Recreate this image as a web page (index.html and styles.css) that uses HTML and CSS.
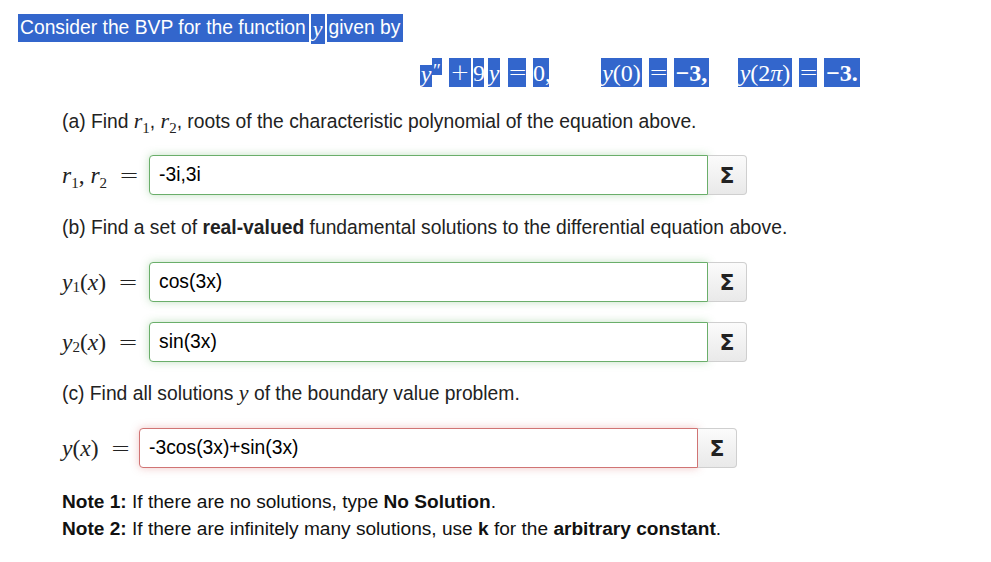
FILE: index.html
```html
<!DOCTYPE html>
<html>
<head>
<meta charset="utf-8">
<link rel="stylesheet" href="styles.css">
</head>
<body>
<div class="page">
  <div class="intro"><span class="hl">Consider the BVP for the function</span><span class="hlm"><i>y</i></span><span class="hl hl2">given by</span></div>

  <div class="eqline">
    <span class="tok t-y1"><i>y</i></span>
    <span class="tok t-pp">″</span>
    <span class="tok t-plus op">+</span>
    <span class="tok t-9">9</span>
    <span class="tok t-y2"><i>y</i></span>
    <span class="tok t-eq op">=</span>
    <span class="tok t-0">0,</span>
    <span class="tok t-y0"><i>y</i>(0)</span>
    <span class="tok t-eq op">=</span>
    <span class="tok t-m3 b">−3,</span>
    <span class="tok t-y2pi"><i>y</i>(2<i>π</i>)</span>
    <span class="tok t-eq op">=</span>
    <span class="tok t-m3b b">−3.</span>
  </div>

  <div class="section">
    <p class="q">(a) Find <span class="m"><i>r</i><sub>1</sub></span>, <span class="m"><i>r</i><sub>2</sub></span>, roots of the characteristic polynomial of the equation above.</p>
    <div class="row">
      <span class="lbl m"><i>r</i><sub>1</sub>, <i>r</i><sub>2</sub><span class="eq">=</span></span>
      <div class="field ok"><span class="val">-3i,3i</span></div>
      <button class="sig">Σ</button>
    </div>
  </div>

  <div class="section">
    <p class="q q-b">(b) Find a set of <b>real-valued</b> fundamental solutions to the differential equation above.</p>
    <div class="row">
      <span class="lbl m"><i>y</i><sub class="s2">1</sub>(<i>x</i>)<span class="eq">=</span></span>
      <div class="field ok"><span class="val">cos(3x)</span></div>
      <button class="sig">Σ</button>
    </div>
    <div class="row row2">
      <span class="lbl m"><i>y</i><sub class="s2">2</sub>(<i>x</i>)<span class="eq">=</span></span>
      <div class="field ok"><span class="val">sin(3x)</span></div>
      <button class="sig">Σ</button>
    </div>
  </div>

  <div class="section">
    <p class="q q-c">(c) Find all solutions <span class="m"><i>y</i></span> of the boundary value problem.</p>
    <div class="row">
      <span class="lbl lbl-c m"><i>y</i>(<i>x</i>)<span class="eq">=</span></span>
      <div class="field bad"><span class="val">-3cos(3x)+sin(3x)</span></div>
      <button class="sig">Σ</button>
    </div>
  </div>

  <div class="notes">
    <p><b>Note 1:</b> If there are no solutions, type <b>No Solution</b>.</p>
    <p><b>Note 2:</b> If there are infinitely many solutions, use <b>k</b> for the <b>arbitrary constant</b>.</p>
  </div>
</div>
</body>
</html>
```

FILE: styles.css
```css
html, body {
  margin: 0;
  padding: 0;
  background: #ffffff;
}
.page {
  font-family: "Liberation Sans", Arial, sans-serif;
  font-size: 19.3px;
  color: #222;
  padding: 14px 0 0 18px;
}
.intro {
  display: flex;
  align-items: flex-start;
  height: 28px;
}
.hl {
  background: #3366cc;
  color: #fff;
  line-height: 28px;
  padding: 0 3px 0 2px;
}
.hl2 { padding: 0 3px 0 2px; }
.hlm {
  background: #3366cc;
  color: #fff;
  font-family: "Liberation Serif", serif;
  font-size: 22px;
  line-height: 30px;
  height: 30px;
  padding: 0 2px;
  margin: 0 2px;
}
.eqline {
  display: flex;
  align-items: flex-start;
  margin: 16px 0 0 402px;
  font-family: "Liberation Serif", "DejaVu Serif", serif;
  font-size: 24px;
  color: #fff;
  height: 30px;
}
.tok {
  background: #3366cc;
  height: 29px;
  line-height: 30px;
  text-align: center;
  white-space: nowrap;
  margin-left: 7px;
}
.tok.b { font-weight: bold; }
.tok.op {
  font-family: "DejaVu Sans", sans-serif;
  font-size: 23px;
  font-weight: 200;
  line-height: 29px;
}
.t-y1 { width: 12px; height: 22px; line-height: 18px; margin-top: 7px; margin-left: 0; }
.t-pp { width: 10px; height: 17px; line-height: 26px; font-size: 19px; margin-left: 0; }
.t-plus { width: 22px; }
.t-9 { width: 11px; margin-left: 2px; }
.t-y2 { width: 12px; margin-left: 4px; }
.t-eq { width: 18px; margin-left: 8px; }
.t-0 { width: 16px; }
.t-y0 { width: 41px; margin-left: 52px; }
.t-m3 { width: 35px; }
.t-y2pi { width: 54px; margin-left: 29px; }
.t-m3b { width: 36px; }
.t-eq + .t-m3, .t-eq + .t-m3b, .t-y0 + .t-eq, .t-y2pi + .t-eq { margin-left: 7px; }
.section {
  padding-left: 44px;
}
.q {
  margin: 22px 0 0 0;
  line-height: 24px;
}
.q-b { margin-top: 21px; }
.q-c { margin-top: 20px; }
.m {
  font-family: "Liberation Serif", "DejaVu Serif", serif;
  font-size: 22px;
}
.q .m { line-height: 0; }
.m sub {
  font-size: 15px;
  vertical-align: -5px;
  font-style: normal;
  line-height: 0;
}
.m sub.s2 { vertical-align: -2px; font-size: 15px; }
.row {
  display: flex;
  align-items: center;
  margin-top: 21px;
  height: 40px;
}
.section .q-b + .row, .q-c + .row { margin-top: 22px; }
.row2 { margin-top: 20px; }
.lbl {
  width: 87px;
  white-space: nowrap;
  color: #222;
  line-height: 24px;
  font-size: 23.5px;
}
.lbl-c { width: 77px; }
.eq {
  font-family: "DejaVu Sans", sans-serif;
  font-weight: 200;
  font-size: 24px;
  margin-left: 12px;
}
.field {
  box-sizing: border-box;
  width: 559px;
  height: 40px;
  border: 1px solid;
  border-radius: 4px 0 0 4px;
  background: #fff;
  display: flex;
  align-items: center;
  padding-left: 9px;
  color: #000;
}
.field.ok {
  border-color: #6aae6a;
  box-shadow: 0 0 9px rgba(80, 170, 80, 0.35);
}
.field.bad {
  border-color: #d07474;
  box-shadow: 0 0 9px rgba(210, 90, 90, 0.35);
}
.val { font-size: 19.3px; }
.sig {
  width: 39px;
  height: 40px;
  border: 1px solid #cfcfcf;
  border-left: none;
  border-radius: 0 4px 4px 0;
  background: linear-gradient(#fbfbfb, #e9e9e9);
  font-family: "DejaVu Sans", sans-serif;
  font-weight: bold;
  font-size: 22px;
  color: #222;
  padding: 0;
  margin: 0;
}
.notes {
  padding-left: 44px;
  margin-top: 20px;
  color: #111;
  font-size: 19.1px;
}
.notes p {
  margin: 0;
  line-height: 27px;
}
```
